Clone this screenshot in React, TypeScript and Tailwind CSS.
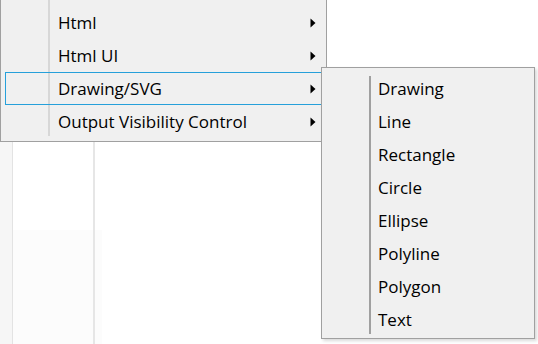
import React from "react";

const mainItems = ["Html", "Html UI", "Drawing/SVG", "Output Visibility Control"];
const subItems = ["Drawing", "Line", "Rectangle", "Circle", "Ellipse", "Polyline", "Polygon", "Text"];

function Arrow() {
  return (
    <svg width="6" height="10" viewBox="0 0 6 10" className="block">
      <path d="M0.5 0.5 L5.5 5 L0.5 9.5 Z" fill="#000" />
    </svg>
  );
}

export default function App() {
  return (
    <div
      className="relative w-[538px] h-[344px] overflow-hidden bg-white"
      style={{ fontFamily: '"Open Sans", "Noto Sans", sans-serif' }}
    >
      {/* background content */}
      <div className="flex h-full">
        <div className="w-[13px] bg-[#f6f6f6] border-r border-[#e3e3e3]" />
        <div className="w-[80px] flex flex-col">
          <div className="h-[230px] bg-white" />
          <div className="flex-1 bg-[#fcfcfc]" />
        </div>
        <div className="w-[2px] bg-[#e6e6e6]" />
        <div className="w-[7px] flex flex-col">
          <div className="h-[230px] bg-white" />
          <div className="flex-1 bg-[#fcfcfc]" />
        </div>
        <div className="flex-1 bg-white" />
      </div>

      {/* main menu */}
      <div className="absolute left-0 top-0 w-[327px] h-[142px] bg-[#f0f0f0] border-l border-r border-b border-[#a0a0a0] pt-[6px]">
        <div className="absolute left-[47px] top-0 w-[2px] h-[136px] bg-[#d7d7d7]" />
        {mainItems.map((t, i) => (
          <div
            key={t}
            className={`relative ml-[4px] mr-[4px] h-[33px] flex items-center border ${
              i === 2 ? "border-[#26a0da]" : "border-transparent"
            }`}
          >
            <span className="ml-[52px] text-[17px] font-[380] text-black leading-none">{t}</span>
            <span className="ml-auto mr-[5px]">
              <Arrow />
            </span>
          </div>
        ))}
      </div>

      {/* submenu */}
      <div className="absolute left-[321px] top-[67px] w-[214px] h-[272px] bg-[#f0f0f0] border border-[#a0a0a0] pt-[4px] shadow-[2px_2px_3px_rgba(0,0,0,0.15)]">
        <div className="absolute left-[47px] top-[8px] w-[2px] h-[258px] bg-[#a0a0a0]" />
        {subItems.map((t) => (
          <div key={t} className="h-[33px] flex items-center">
            <span className="ml-[56px] text-[17px] font-[380] text-black leading-none">{t}</span>
          </div>
        ))}
      </div>
    </div>
  );
}
